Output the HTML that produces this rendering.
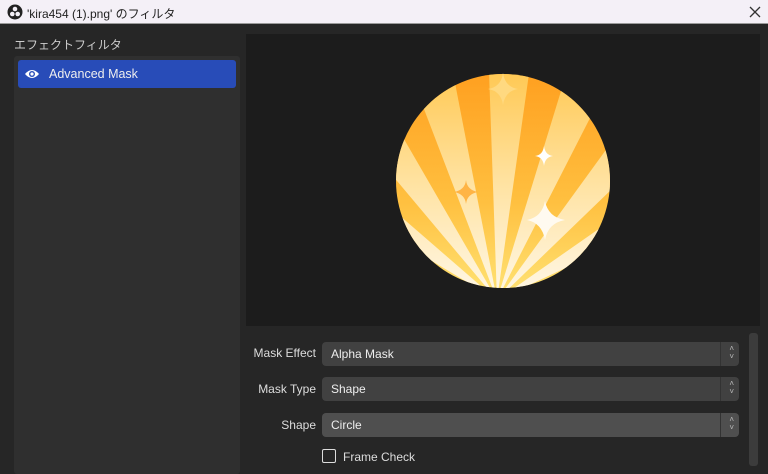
<!DOCTYPE html>
<html><head><meta charset="utf-8"><style>
*{margin:0;padding:0;box-sizing:border-box}
body{width:768px;height:474px;overflow:hidden;background:#262626;font-family:"Liberation Sans","Noto Sans CJK JP",sans-serif;position:relative;color:#e6e6e6}
.title{position:absolute;left:0;top:0;width:768px;height:24px;background:#f4f0f7;border-bottom:1px solid #9a9a9a}
.title span{position:absolute;left:27px;top:5px;font-size:12px;color:#222}
.abs{position:absolute}
.lbl{position:absolute;font-size:12px;color:#ddd;text-align:right;width:80px}
.combo{position:absolute;left:322px;width:417px;height:24px;background:#414141;border-radius:4px;font-size:12px;color:#eee;padding:5px 9px}
.combo:after{content:"";position:absolute;right:18px;top:0;width:1px;height:24px;background:#333}
.combo i{position:absolute;right:5px;top:3px;font-style:normal;font-size:8px;line-height:8px;color:#bbb;text-align:center}
</style></head><body>
<div class="title">
<svg class="abs" style="left:7px;top:4px" width="16" height="16" viewBox="0 0 16 16"><circle cx="8" cy="8" r="7.5" fill="#222"/><circle cx="8" cy="5" r="2.3" fill="#f4f0f7"/><circle cx="5.3" cy="10" r="2.3" fill="#f4f0f7"/><circle cx="10.7" cy="10" r="2.3" fill="#f4f0f7"/></svg>
<span>'kira454 (1).png' のフィルタ</span>
<svg class="abs" style="left:748px;top:5px" width="14" height="14"><path d="M2 2L12 12M12 2L2 12" stroke="#333" stroke-width="1.3"/></svg>
</div>
<div class="abs" style="left:14px;top:36px;font-size:12px;color:#ccc">エフェクトフィルタ</div>
<div class="abs" style="left:14px;top:56px;width:226px;height:418px;background:#2f2f2f;border-radius:3px"></div>
<div class="abs" style="left:18px;top:60px;width:218px;height:28px;background:#284cb8;border-radius:3px"></div>
<svg class="abs" style="left:24px;top:67px" width="16" height="14" viewBox="0 0 16 14"><path d="M1 7Q8 -1 15 7Q8 15 1 7Z" fill="#fff"/><circle cx="8" cy="7" r="3" fill="#284cb8"/><circle cx="8" cy="7" r="1.6" fill="#fff"/></svg>
<div class="abs" style="left:49px;top:67px;font-size:12.5px;color:#eee">Advanced Mask</div>
<div class="abs" style="left:246px;top:34px;width:514px;height:292px;background:#1c1c1c"></div>
<svg class="abs" style="left:390px;top:68px" width="230" height="226" viewBox="390 68 230 226">
<defs><clipPath id="c"><circle cx="503" cy="181" r="107"/></clipPath>
<linearGradient id="d" gradientUnits="userSpaceOnUse" x1="0" y1="74" x2="0" y2="288"><stop offset="0" stop-color="#ffa020"/><stop offset="0.6" stop-color="#ffc040"/><stop offset="1" stop-color="#ffe070"/></linearGradient>
<linearGradient id="l" gradientUnits="userSpaceOnUse" x1="0" y1="74" x2="0" y2="288"><stop offset="0" stop-color="#ffc955"/><stop offset="0.5" stop-color="#ffe2a0"/><stop offset="1" stop-color="#fff6e2"/></linearGradient></defs>
<g clip-path="url(#c)">
<rect x="390" y="68" width="230" height="226" fill="url(#d)"/>
<g fill="url(#l)">
<polygon points="497,300 483,-100 553,-96"/>
<polygon points="497,300 614,-82 679,-56"/>
<polygon points="497,300 732,-24 785,22"/>
<polygon points="497,300 825,71 859,131"/>
<polygon points="497,300 881,190 895,258"/>
<polygon points="497,300 421,-93 354,-74"/>
<polygon points="497,300 297,-46 240,-6"/>
<polygon points="497,300 195,38 154,94"/>
<polygon points="497,300 126,150 106,217"/>
</g>
</g>
<path d="M503 73Q505 87 518 89Q505 91 503 105Q501 91 488 89Q501 87 503 73Z" fill="#ffd980"/>
<path d="M544 146Q545 155 553 156Q545 157 544 166Q543 157 535 156Q543 155 544 146Z" fill="#fff"/>
<path d="M545 201Q548 217 565 220Q548 223 545 240Q542 223 527 220Q542 217 545 201Z" fill="#fffaf0"/>
<path d="M466 180Q467 190 478 192Q467 194 466 204Q465 194 454 192Q465 190 466 180Z" fill="#ffb445"/>
</svg>
<div class="lbl" style="left:236px;top:346px">Mask Effect</div>
<div class="lbl" style="left:236px;top:382px">Mask Type</div>
<div class="lbl" style="left:236px;top:418px">Shape</div>
<div class="combo" style="top:342px">Alpha Mask<i>˄<br>˅</i></div>
<div class="combo" style="top:377px">Shape<i>˄<br>˅</i></div>
<div class="combo" style="top:413px;background:#4f4f4f">Circle<i>˄<br>˅</i></div>
<div class="abs" style="left:322px;top:449px;width:14px;height:14px;border:1.5px solid #ddd;border-radius:2px"></div>
<div class="abs" style="left:343px;top:450px;font-size:12px;color:#ddd">Frame Check</div>
<div class="abs" style="left:749px;top:333px;width:9px;height:133px;background:#3c3c3c;border-radius:3px"></div>
</body></html>
